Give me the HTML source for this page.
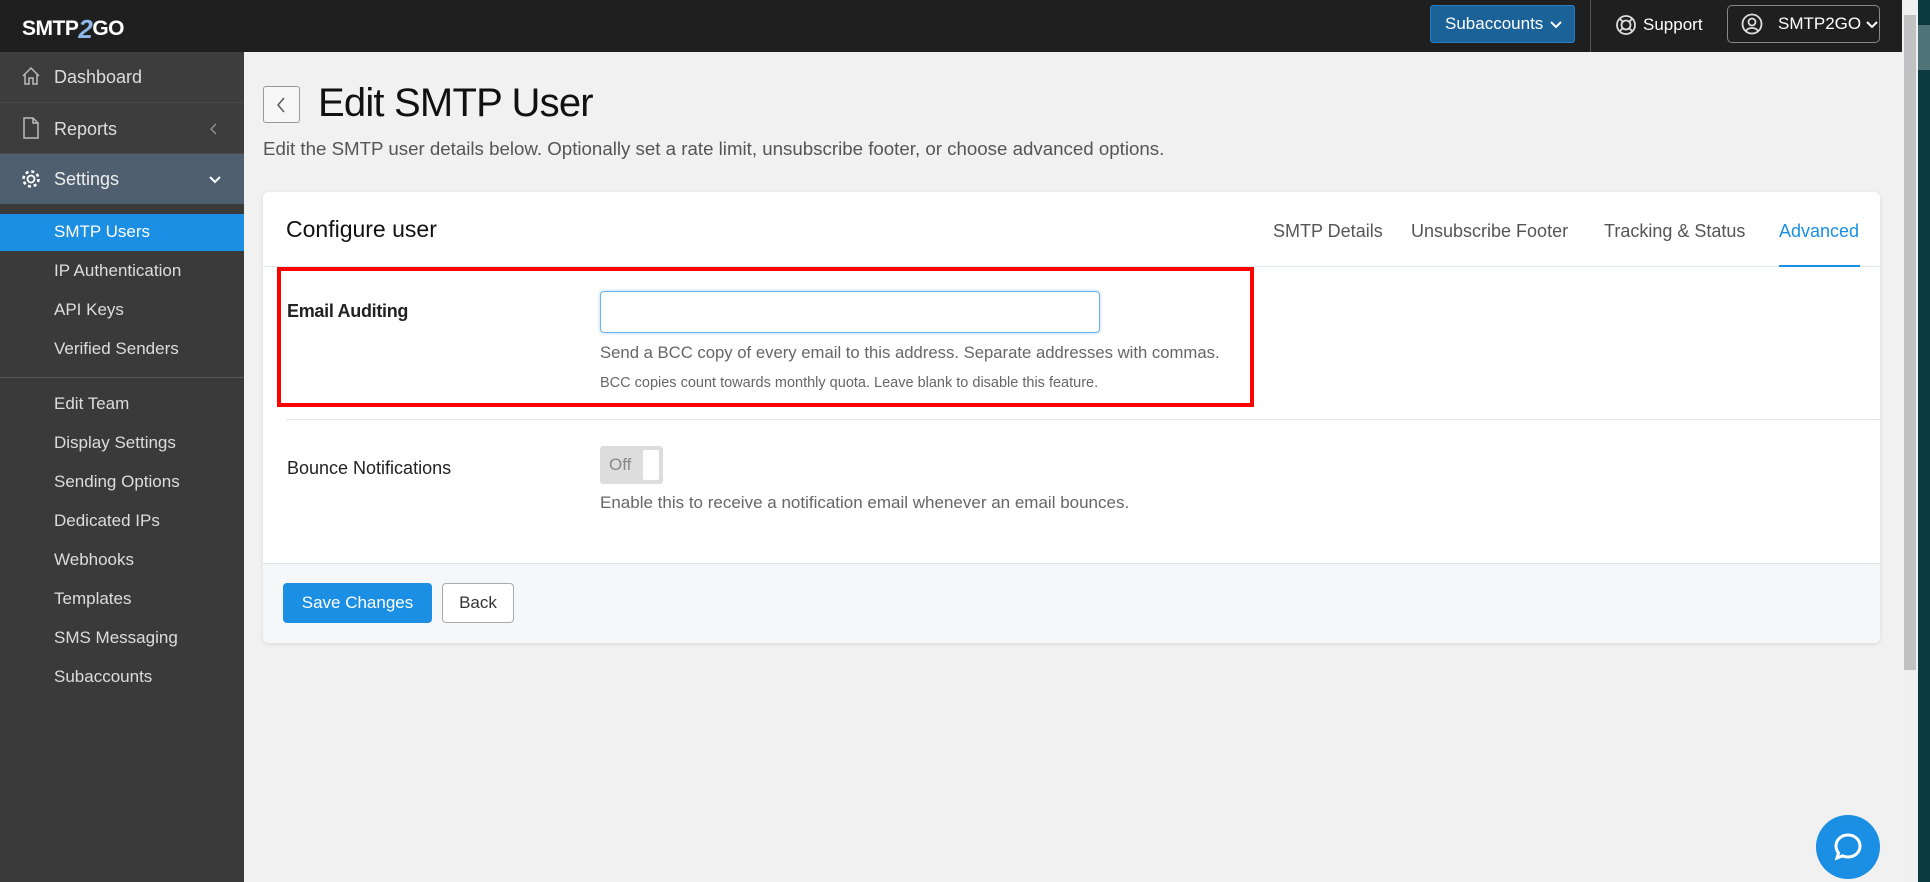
<!DOCTYPE html>
<html><head><meta charset="utf-8"><style>
*{box-sizing:border-box;margin:0;padding:0}
body{width:1930px;height:882px;overflow:hidden;background:#f1f1f1;font-family:"Liberation Sans",sans-serif;position:relative}
.a{position:absolute;white-space:nowrap}
.hdr{left:0;top:0;width:1902px;height:52px;background:#1f1f1f}
.side{left:0;top:52px;width:244px;height:830px;background:#3a3a3a}
.nav{left:0;width:244px;color:#ddd;font-size:18px;line-height:20px}
.sub{left:54px;color:#ddd;font-size:17px}
.sb{left:1902px;top:0;width:16px;height:882px;background:#f0f0f0}
</style></head><body>
<div class="a hdr"></div>
<div class="a" style="left:22px;top:11px;color:#fff;font-weight:bold;font-size:21px;letter-spacing:-0.5px">SMTP<span style="color:#8fb8e8;font-style:italic;font-size:26px;position:relative;top:3px">2</span>GO</div>
<div class="a" style="left:1430px;top:5px;width:145px;height:38px;background:#1b6299;border:1px solid #2a7fc0;border-radius:3px;color:#fff;font-size:17px;line-height:36px;padding-left:14px">Subaccounts <svg width="12" height="8" viewBox="0 0 12 8" style="margin-left:2px"><path d="M1 1l5 5 5-5" stroke="#fff" stroke-width="2" fill="none"/></svg></div>
<div class="a" style="left:1590px;top:0;width:1px;height:52px;background:#555"></div>
<svg class="a" style="left:1615px;top:14px" width="22" height="22" viewBox="0 0 22 22"><circle cx="11" cy="11" r="9" stroke="#ddd" stroke-width="1.8" fill="none"/><circle cx="11" cy="11" r="4.5" stroke="#ddd" stroke-width="1.8" fill="none"/><path d="M5 5l3 3M17 5l-3 3M5 17l3-3M17 17l-3-3" stroke="#ddd" stroke-width="1.8"/></svg>
<div class="a" style="left:1643px;top:15px;color:#fff;font-size:17px">Support</div>
<div class="a" style="left:1727px;top:5px;width:153px;height:38px;border:1px solid #888;border-radius:5px;color:#fff;font-size:17px;line-height:36px;padding-left:50px">SMTP2GO <svg width="12" height="8" viewBox="0 0 12 8"><path d="M1 1l5 5 5-5" stroke="#fff" stroke-width="2" fill="none"/></svg></div>
<svg class="a" style="left:1741px;top:13px" width="22" height="22" viewBox="0 0 22 22"><circle cx="11" cy="11" r="9.5" stroke="#ddd" stroke-width="1.8" fill="none"/><circle cx="11" cy="9" r="3.5" stroke="#ddd" stroke-width="1.8" fill="none"/><path d="M5 18c2-4 10-4 12 0" stroke="#ddd" stroke-width="1.8" fill="none"/></svg>
<div class="a sb"></div>
<div class="a" style="left:1904px;top:15px;width:12px;height:655px;background:#c1c1c1"></div>
<div class="a" style="left:1918px;top:0;width:12px;height:882px;background:#0b3a40"></div>
<div class="a" style="left:1918px;top:25px;width:12px;height:45px;background:#4e7478"></div>

<div class="a side"></div>
<div class="a nav" style="top:52px;height:51px;background:#3d3d3d;border-bottom:1px solid #4a4a4a"></div>
<div class="a nav" style="top:103px;height:51px;background:#3d3d3d;border-bottom:1px solid #4a4a4a"></div>
<div class="a nav" style="top:154px;height:50px;background:#4f5f70"></div>
<svg class="a" style="left:21px;top:66px" width="20" height="20" viewBox="0 0 20 20"><path d="M2 10L10 2l8 8M4 8v10h4v-6h4v6h4V8" stroke="#bbb" stroke-width="1.5" fill="none"/></svg>
<div class="a nav" style="left:54px;top:67px">Dashboard</div>
<svg class="a" style="left:22px;top:117px" width="18" height="22" viewBox="0 0 18 22"><path d="M2 1h9l5 5v15H2z M11 1v5h5" stroke="#bbb" stroke-width="1.5" fill="none"/></svg>
<div class="a nav" style="left:54px;top:119px">Reports</div>
<svg class="a" style="left:210px;top:123px" width="8" height="12" viewBox="0 0 8 12"><path d="M6 1L1 6l5 5" stroke="#999" stroke-width="1.3" fill="none"/></svg>
<svg class="a" style="left:20px;top:168px" width="22" height="22" viewBox="0 0 22 22"><circle cx="11" cy="11" r="3.5" stroke="#fff" stroke-width="1.8" fill="none"/><circle cx="11" cy="11" r="7.5" stroke="#fff" stroke-width="2.6" fill="none" stroke-dasharray="3 2.9"/></svg>
<div class="a nav" style="left:54px;top:169px;color:#eee">Settings</div>
<svg class="a" style="left:209px;top:176px" width="12" height="8" viewBox="0 0 12 8"><path d="M1 1l5 5 5-5" stroke="#fff" stroke-width="2" fill="none"/></svg>
<div class="a" style="left:0;top:214px;width:244px;height:37px;background:#1a8fe3"></div>
<div class="a sub" style="top:222px;color:#fff">SMTP Users</div>
<div class="a sub" style="top:261px">IP Authentication</div>
<div class="a sub" style="top:300px">API Keys</div>
<div class="a sub" style="top:339px">Verified Senders</div>
<div class="a" style="left:0;top:377px;width:244px;height:1px;background:#555"></div>
<div class="a sub" style="top:394px">Edit Team</div>
<div class="a sub" style="top:433px">Display Settings</div>
<div class="a sub" style="top:472px">Sending Options</div>
<div class="a sub" style="top:511px">Dedicated IPs</div>
<div class="a sub" style="top:550px">Webhooks</div>
<div class="a sub" style="top:589px">Templates</div>
<div class="a sub" style="top:628px">SMS Messaging</div>
<div class="a sub" style="top:667px">Subaccounts</div>

<div class="a" style="left:263px;top:86px;width:37px;height:37px;border:1px solid #999;border-radius:3px;background:#f6f6f6"></div>
<svg class="a" style="left:276px;top:97px" width="10" height="16" viewBox="0 0 10 16"><path d="M8 1L2 8l6 7" stroke="#555" stroke-width="1.4" fill="none"/></svg>
<div class="a" style="left:318px;top:81px;font-size:40px;color:#111;letter-spacing:-0.8px">Edit SMTP User</div>
<div class="a" style="left:263px;top:138px;font-size:18.7px;color:#555">Edit the SMTP user details below. Optionally set a rate limit, unsubscribe footer, or choose advanced options.</div>

<div class="a" style="left:263px;top:192px;width:1617px;height:451px;background:#fff;border-radius:6px;box-shadow:0 1px 4px rgba(0,0,0,.1);overflow:hidden">
 <div class="a" style="left:0;top:371px;width:1617px;height:80px;background:#f6f7f8;border-top:1px solid #dde4ea"></div>
 <div class="a" style="left:0;top:74px;width:1617px;height:1px;background:#dde8f0"></div>
</div>
<div class="a" style="left:286px;top:216px;font-size:23px;color:#111">Configure user</div>
<div class="a" style="left:1273px;top:221px;font-size:18px;color:#555">SMTP Details</div>
<div class="a" style="left:1411px;top:221px;font-size:18px;color:#555">Unsubscribe Footer</div>
<div class="a" style="left:1604px;top:221px;font-size:18px;color:#555">Tracking &amp; Status</div>
<div class="a" style="left:1779px;top:221px;font-size:18px;color:#1a8fe3">Advanced</div>
<div class="a" style="left:1779px;top:265px;width:81px;height:2px;background:#1a8fe3"></div>

<div class="a" style="left:277px;top:267px;width:977px;height:140px;border:4px solid #f00"></div>
<div class="a" style="left:287px;top:301px;font-size:18px;color:#222;font-weight:bold;letter-spacing:-0.3px">Email Auditing</div>
<div class="a" style="left:600px;top:291px;width:500px;height:42px;border:1.5px solid #6bb4ee;border-radius:4px;box-shadow:0 0 3px rgba(26,143,227,.4);background:#fff"></div>
<div class="a" style="left:600px;top:343px;font-size:16.7px;color:#666">Send a BCC copy of every email to this address. Separate addresses with commas.</div>
<div class="a" style="left:600px;top:375px;font-size:14.5px;color:#666">BCC copies count towards monthly quota. Leave blank to disable this feature.</div>
<div class="a" style="left:286px;top:419px;width:1594px;height:1px;background:#e4e9ee"></div>
<div class="a" style="left:287px;top:458px;font-size:18px;color:#222">Bounce Notifications</div>
<div class="a" style="left:600px;top:446px;width:63px;height:38px;background:#ddd;border-radius:3px;color:#888;font-size:17px;line-height:38px;padding-left:9px">Off</div>
<div class="a" style="left:643px;top:450px;width:16px;height:30px;background:#fff;border-radius:2px"></div>
<div class="a" style="left:600px;top:493px;font-size:17px;color:#666">Enable this to receive a notification email whenever an email bounces.</div>

<div class="a" style="left:283px;top:583px;width:149px;height:40px;background:#1a8fe3;border-radius:4px;color:#fff;font-size:17px;line-height:40px;text-align:center">Save Changes</div>
<div class="a" style="left:442px;top:583px;width:72px;height:40px;background:#fff;border:1px solid #aaa;border-radius:4px;color:#333;font-size:17px;line-height:38px;text-align:center">Back</div>

<div class="a" style="left:1816px;top:815px;width:64px;height:64px;border-radius:50%;background:#1a8fe3"></div>
<svg class="a" style="left:1831px;top:830px" width="34" height="34" viewBox="0 0 34 34"><path d="M17 5c7 0 12 5 12 11s-5 11-12 11c-2 0-4-.4-5.5-1.2L6 28l1.5-5C6 21 5 19 5 16 5 10 10 5 17 5z" stroke="#fff" stroke-width="3" fill="none"/></svg>
</body></html>
